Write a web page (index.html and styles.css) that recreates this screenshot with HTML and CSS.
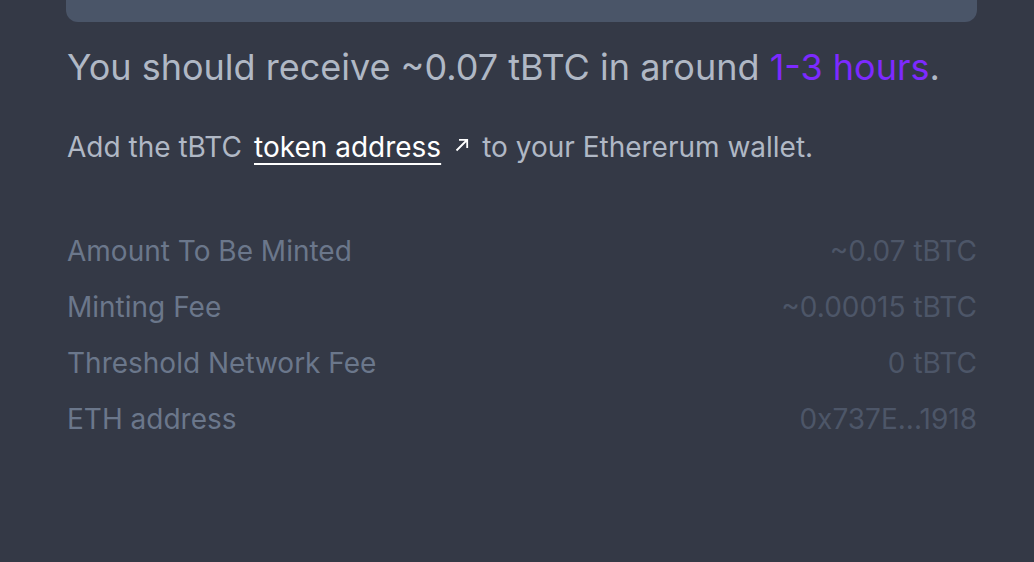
FILE: index.html
```html
<!DOCTYPE html>
<html lang="en">
  <head>
    <meta charset="UTF-8" />
    <meta name="viewport" content="width=device-width, initial-scale=1.0" />
    <title>tBTC Minting</title>
    <link rel="stylesheet" href="styles.css">
  </head>
  <body>
    <div class="mint-container">
      <div class="status-card"></div>
      <p class="receive-text">
        You should receive ~0.07 tBTC in around <span class="highlight">1-3 hours</span>.
      </p>
      <p class="token-text">
        Add the tBTC
        <a href="#" class="token-link">token address</a>
        <svg class="external-icon" viewBox="0 0 14 14" width="14" height="14">
          <path d="M1.5 12.5L11.5 2.5M4 1.8H12.2V10" fill="none" stroke="currentColor" stroke-width="1.8" />
        </svg>
        to your Ethererum wallet.
      </p>
      <div class="details">
        <div class="detail-row">
          <span class="detail-label">Amount To Be Minted</span>
          <span class="detail-value">~0.07 tBTC</span>
        </div>
        <div class="detail-row">
          <span class="detail-label">Minting Fee</span>
          <span class="detail-value">~0.00015 tBTC</span>
        </div>
        <div class="detail-row">
          <span class="detail-label">Threshold Network Fee</span>
          <span class="detail-value">0 tBTC</span>
        </div>
        <div class="detail-row">
          <span class="detail-label">ETH address</span>
          <span class="detail-value">0x737E...1918</span>
        </div>
      </div>
    </div>
  </body>
</html>
```

FILE: styles.css
```css
body {
  margin: 0;
  background-color: #343946;
  font-family: Inter, "Noto Sans", sans-serif;
  height: 562px;
  overflow: hidden;
}
.mint-container {
  width: 910px;
  margin-left: 67px;
}
.status-card {
  height: 22px;
  margin-left: -1px;
  background-color: #4a5568;
  border-radius: 0 0 12px 12px;
}
.receive-text {
  margin: 23px 0 0;
  font-size: 36px;
  line-height: 44px;
  color: #b0b8c5;
}
.highlight {
  color: #7d2aff;
}
.token-text {
  margin: 42px 0 0;
  font-size: 28px;
  line-height: 32px;
  color: #b0b8c5;
  display: flex;
  align-items: center;
}
.token-link {
  color: #ffffff;
  text-decoration: underline;
  text-underline-offset: 6px;
  text-decoration-thickness: 2px;
  margin-left: 12px;
}
.external-icon {
  color: #ffffff;
  margin: -4px 13px 0 14px;
}
.details {
  margin-top: 72px;
  display: flex;
  flex-direction: column;
  gap: 24px;
}
.detail-row {
  display: flex;
  justify-content: space-between;
  font-size: 28px;
  line-height: 32px;
}
.detail-label {
  color: #6b778b;
}
.detail-value {
  color: #4d5668;
}
```
